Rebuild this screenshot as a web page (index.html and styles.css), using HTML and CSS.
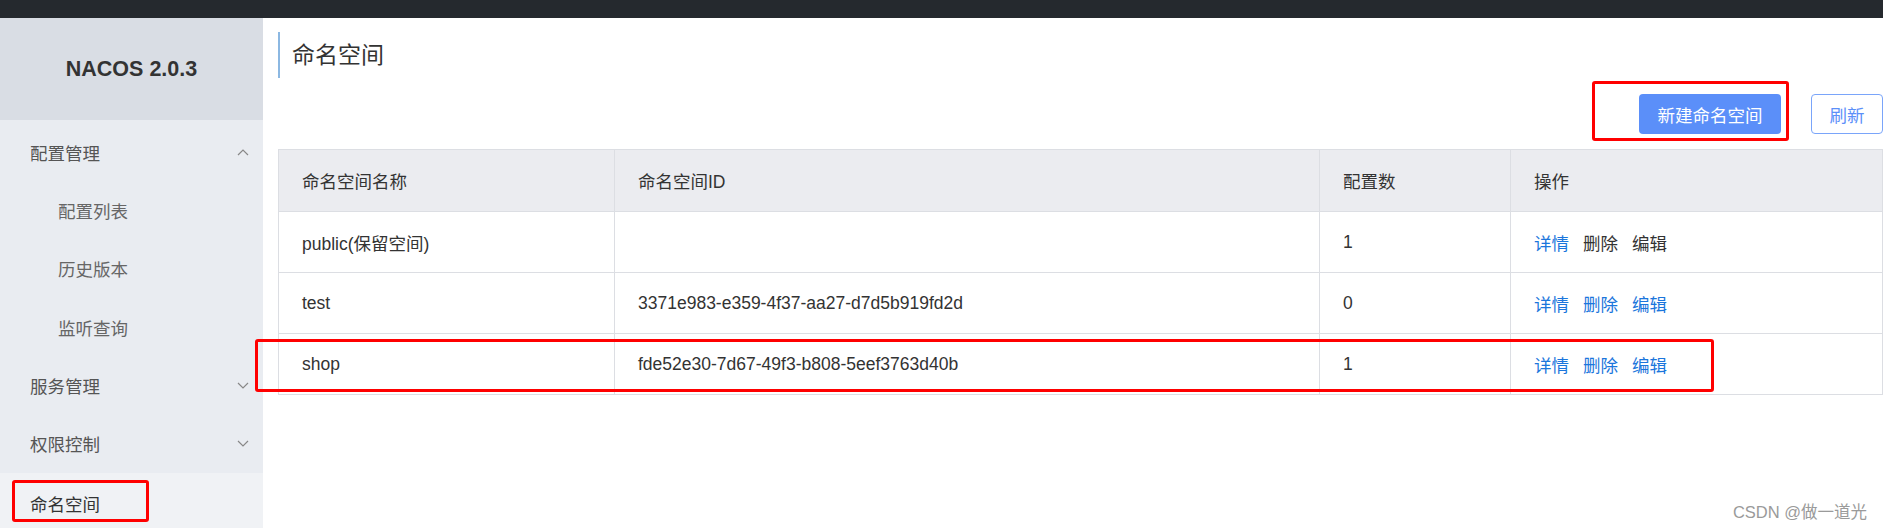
FILE: index.html
```html
<!DOCTYPE html>
<html lang="zh-CN">
<head>
    <meta charset="UTF-8">
    <meta name="viewport" content="width=device-width, initial-scale=1.0">
    <title>NACOS 命名空间</title>
    <link rel="stylesheet" href="styles.css">
</head>
<body>
    <div class="topbar"></div>
    <div class="layout">
        <div class="sidebar">
            <div class="logo">NACOS 2.0.3</div>
            <ul class="menu">
                <li class="menu-item">配置管理
                    <svg class="arrow" viewBox="0 0 12 7"><path d="M1 6 L6 1 L11 6" /></svg>
                </li>
                <li class="menu-item sub">配置列表</li>
                <li class="menu-item sub">历史版本</li>
                <li class="menu-item sub">监听查询</li>
                <li class="menu-item">服务管理
                    <svg class="arrow" viewBox="0 0 12 7"><path d="M1 1 L6 6 L11 1" /></svg>
                </li>
                <li class="menu-item">权限控制
                    <svg class="arrow" viewBox="0 0 12 7"><path d="M1 1 L6 6 L11 1" /></svg>
                </li>
                <li class="menu-item active">命名空间</li>
            </ul>
        </div>
        <div class="main">
            <h1 class="page-title">命名空间</h1>
            <div class="toolbar">
                <button class="btn btn-primary">新建命名空间</button>
                <button class="btn btn-normal">刷新</button>
            </div>
            <table class="ns-table">
                <colgroup>
                    <col style="width: 336px">
                    <col style="width: 705px">
                    <col style="width: 191px">
                    <col>
                </colgroup>
                <thead>
                    <tr>
                        <th>命名空间名称</th>
                        <th>命名空间ID</th>
                        <th>配置数</th>
                        <th>操作</th>
                    </tr>
                </thead>
                <tbody>
                    <tr>
                        <td>public(保留空间)</td>
                        <td></td>
                        <td>1</td>
                        <td><span class="link">详情</span><span class="link disabled">删除</span><span class="link disabled">编辑</span></td>
                    </tr>
                    <tr>
                        <td>test</td>
                        <td>3371e983-e359-4f37-aa27-d7d5b919fd2d</td>
                        <td>0</td>
                        <td><span class="link">详情</span><span class="link">删除</span><span class="link">编辑</span></td>
                    </tr>
                    <tr>
                        <td>shop</td>
                        <td>fde52e30-7d67-49f3-b808-5eef3763d40b</td>
                        <td>1</td>
                        <td><span class="link">详情</span><span class="link">删除</span><span class="link">编辑</span></td>
                    </tr>
                </tbody>
            </table>
        </div>
    </div>

    <!-- red annotation boxes drawn over the screenshot -->
    <div class="mark mark-menu"></div>
    <div class="mark mark-btn"></div>
    <div class="mark mark-row"></div>

    <div class="watermark">CSDN @做一道光</div>
</body>
</html>
```

FILE: styles.css
```css
body {
    margin: 0;
    height: 528px;
    overflow: hidden;
    font-family: "Liberation Sans", "Noto Sans CJK SC", sans-serif;
    font-size: 17.5px;
    color: #333;
    background-color: #fff;
}
.topbar {
    height: 18px;
    background-color: #25292e;
}
.layout {
    display: flex;
    height: 510px;
}
.sidebar {
    width: 263px;
    flex-shrink: 0;
    display: flex;
    flex-direction: column;
    overflow: hidden;
    background-color: #e9ecf1;
}
.logo {
    height: 102px;
    flex-shrink: 0;
    display: flex;
    align-items: center;
    justify-content: center;
    background-color: #d9dde4;
    font-size: 21.5px;
    font-weight: bold;
    color: #333;
}
.menu {
    list-style: none;
    margin: 0;
    padding: 3px 0 0 0;
    flex-shrink: 0;
}
.menu-item {
    height: 58.3px;
    display: flex;
    align-items: center;
    justify-content: space-between;
    padding: 0 14px 0 30px;
    color: #555;
}
.menu-item.sub {
    padding-left: 58px;
    color: #666;
}
.menu-item.active {
    background-color: #f0f2f5;
    color: #333;
    height: 62px;
}
.arrow {
    width: 12px;
    height: 7px;
    fill: none;
    stroke: #888;
    stroke-width: 1.2;
}
.main {
    flex: 1;
    padding: 14px 0 0 15px;
}
.page-title {
    margin: 0;
    height: 46px;
    line-height: 46px;
    border-left: 2px solid #8cb8e2;
    padding-left: 12px;
    font-size: 23px;
    font-weight: normal;
    color: #333;
}
.toolbar {
    display: flex;
    justify-content: flex-end;
    gap: 30px;
    margin-top: 16px;
    height: 40px;
}
.btn {
    height: 40px;
    padding: 0 16px;
    border-radius: 4px;
    font-family: inherit;
    font-size: 17.5px;
    white-space: nowrap;
    flex-shrink: 0;
    cursor: pointer;
}
.btn-primary {
    width: 142px;
    border: none;
    background-color: #5b8ff9;
    color: #fff;
}
.btn-normal {
    width: 72px;
    border: 1px solid #7aa5fa;
    background-color: #fff;
    color: #5b8ff9;
}
.ns-table {
    margin-top: 15px;
    width: 100%;
    border-collapse: collapse;
    table-layout: fixed;
    border-left: 1px solid #dcdee3;
}
.ns-table th,
.ns-table td {
    text-align: left;
    padding: 0 23px;
    border-bottom: 1px solid #dcdee3;
    border-right: 1px solid #dcdee3;
    font-weight: normal;
    white-space: nowrap;
}
.ns-table th {
    height: 61px;
    background-color: #ebecf0;
    border-top: 1px solid #dcdee3;
}
.ns-table td {
    height: 60px;
}
.link {
    color: #1b76dc;
    margin-right: 14px;
}
.link.disabled {
    color: #333;
}
.mark {
    position: absolute;
    border: 3px solid #f00;
    border-radius: 3px;
    box-sizing: border-box;
}
.mark-menu {
    left: 12px;
    top: 480px;
    width: 137px;
    height: 42px;
}
.mark-btn {
    left: 1592px;
    top: 81px;
    width: 197px;
    height: 60px;
}
.mark-row {
    left: 255px;
    top: 339px;
    width: 1459px;
    height: 53px;
}
.watermark {
    position: absolute;
    right: 16px;
    top: 499px;
    font-size: 16.5px;
    color: #9a9a9a;
}
```
